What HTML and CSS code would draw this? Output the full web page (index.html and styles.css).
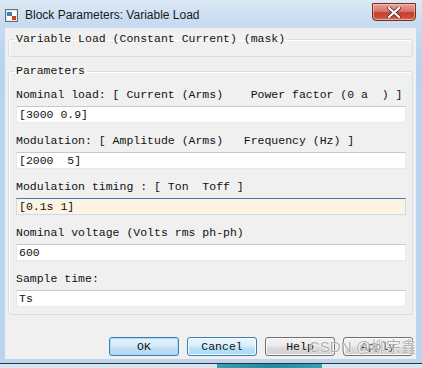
FILE: index.html
```html
<!DOCTYPE html>
<html lang="en">
<head>
    <meta charset="UTF-8">
    <title>Block Parameters: Variable Load</title>

    <link rel="stylesheet" href="styles.css">
</head>

<body>
<div class="window">
    <div class="titlebar">
        <svg class="app-icon" width="13" height="13" viewBox="0 0 13 13">
            <rect x="0.5" y="0.5" width="12" height="12" fill="#e8e8e8" stroke="#6b6b6b"/>
            <rect x="2" y="2" width="9" height="9" fill="#ffffff"/>
            <rect x="2" y="3" width="5" height="4" fill="#3a7fc4"/>
            <rect x="7" y="7" width="4" height="4" fill="#d2401f"/>
        </svg>
        <span class="title">Block Parameters: Variable Load</span>
        <button class="close-btn">
            <svg width="14" height="11" viewBox="0 0 14 11">
                <path d="M2 1 L12 10 M12 1 L2 10" stroke="#4a2020" stroke-width="3.6" stroke-linecap="square"/>
                <path d="M2 1 L12 10 M12 1 L2 10" stroke="#ffffff" stroke-width="2.2" stroke-linecap="square"/>
            </svg>
        </button>
    </div>

    <div class="client">
        <fieldset class="group group-mask">
            <legend>Variable Load (Constant Current) (mask)</legend>
            <div class="mask-desc"></div>
        </fieldset>

        <fieldset class="group group-params">
            <legend>Parameters</legend>

            <div class="param">
                <label>Nominal load: [ Current (Arms)    Power factor (0 a  ) ]</label>
                <div class="field">[3000 0.9]</div>
            </div>

            <div class="param">
                <label>Modulation: [ Amplitude (Arms)   Frequency (Hz) ]</label>
                <div class="field">[2000  5]</div>
            </div>

            <div class="param">
                <label>Modulation timing : [ Ton  Toff ]</label>
                <div class="field field-focus">[0.1s 1]</div>
            </div>

            <div class="param">
                <label>Nominal voltage (Volts rms ph-ph)</label>
                <div class="field">600</div>
            </div>

            <div class="param">
                <label>Sample time:</label>
                <div class="field">Ts</div>
            </div>
        </fieldset>

        <div class="buttons">
            <button class="btn btn-default">OK</button>
            <button class="btn btn-hover">Cancel</button>
            <button class="btn">Help</button>
            <button class="btn">Apply</button>
        </div>
    </div>
</div>
<div class="strip"><div class="strip-task"></div></div>

<div class="watermark">CSDN @柳宗鑫</div>
</body>
</html>
```

FILE: styles.css
```css
body {
    margin: 0;
    width: 422px;
    height: 368px;
    overflow: hidden;
    background-color: #d6e4f2;
    position: relative;
}

.window {
    box-sizing: border-box;
    width: 422px;
    height: 364px;
    padding: 0 6px 4px 5px;
    display: flex;
    flex-direction: column;
    background: linear-gradient(to bottom, #dce9f6 0px, #c9ddf1 20px, #b9d3ee 60px, #bcd5ef 100%);
    border-bottom: 1px solid #2e3338;
}

.titlebar {
    height: 28px;
    display: flex;
    align-items: flex-start;
}

.app-icon {
    margin-top: 9px;
    margin-right: 7px;
}

.title {
    margin-top: 7px;
    font-family: "Liberation Sans", Arial, sans-serif;
    font-size: 12px;
    line-height: 16px;
    color: #1a1a1a;
}

.close-btn {
    margin-left: auto;
    margin-top: 3px;
    margin-right: 0;
    width: 44px;
    height: 18px;
    padding: 0;
    border: 1px solid #7a2b22;
    border-radius: 0 0 4px 4px;
    background: linear-gradient(to bottom, #e7a295 0%, #d7766a 45%, #c4402f 55%, #c9503c 85%, #e07e5c 100%);
    display: flex;
    align-items: center;
    justify-content: center;
    box-shadow: inset 0 0 0 1px rgba(255, 220, 210, 0.5);
}

.client {
    height: 331px;
    box-sizing: border-box;
    padding: 4px 3px 0 3px;
    background-color: #f0f0f0;
    font-family: "Liberation Mono", "DejaVu Sans Mono", monospace;
    font-size: 11.5px;
    color: #111;
}

.group {
    margin: 0;
    border: 1px solid #d5dfe5;
    border-radius: 3px;
    padding: 0 6px 0 7px;
    box-shadow: inset 1px 1px 0 #ffffff;
}

.group legend {
    padding: 0 2px;
    margin-left: -2px;
    line-height: 14px;
    white-space: pre;
}

.mask-desc {
    height: 10px;
}

.group-params {
    margin-top: 7px;
    padding-top: 9px;
    padding-bottom: 7px;
    display: flex;
    flex-direction: column;
    gap: 10px;
}

.param label {
    display: block;
    line-height: 16px;
    margin-bottom: 3px;
    white-space: pre;
}

.field {
    box-sizing: border-box;
    height: 17px;
    padding: 0 2px;
    line-height: 15px;
    background-color: #ffffff;
    border: 1px solid #e6e8ec;
    border-top-color: #c6c8cc;
    white-space: pre;
}

.field-focus {
    background-color: #fdf3e2;
    border-color: #c8dcee;
    border-top-color: #3d7bb0;
}

.buttons {
    margin-top: 22px;
    padding-right: 0;
    display: flex;
    justify-content: flex-end;
    gap: 8px;
}

.btn {
    width: 70px;
    height: 19px;
    padding: 0;
    font-family: "Liberation Mono", "DejaVu Sans Mono", monospace;
    font-size: 11.5px;
    color: #111;
    border: 1px solid #707070;
    border-radius: 3px;
    background: linear-gradient(to bottom, #f2f2f2 0%, #ebebeb 48%, #dddddd 52%, #cfcfcf 100%);
    box-shadow: inset 0 0 0 1px #fbfbfb;
}

.btn-default {
    border-color: #3c7fb1;
    background: linear-gradient(to bottom, #e6f2fb 0%, #d6eaf8 48%, #c4e0f5 52%, #b6d7f1 100%);
    box-shadow: inset 0 0 0 1px #9fdcf8;
}

.btn-hover {
    border-color: #3c7fb1;
    background: linear-gradient(to bottom, #eaf6fd 0%, #d9f0fc 48%, #bee6fd 52%, #a7d9f5 100%);
}

.strip {
    height: 4px;
    background-color: #d8e6f4;
    display: flex;
}

.strip-task {
    margin-left: 217px;
    width: 105px;
    background: linear-gradient(to right, #3a9fb4, #1f8aa3, #3a9fb4);
}

.watermark {
    position: absolute;
    left: 309px;
    top: 338px;
    font-family: "Liberation Sans", "Noto Sans CJK SC", sans-serif;
    font-size: 15px;
    line-height: 18px;
    color: rgba(110, 110, 110, 0.55);
    text-shadow: 0 0 1px #ffffff, 0 0 2px #ffffff;
    white-space: nowrap;
}
```
